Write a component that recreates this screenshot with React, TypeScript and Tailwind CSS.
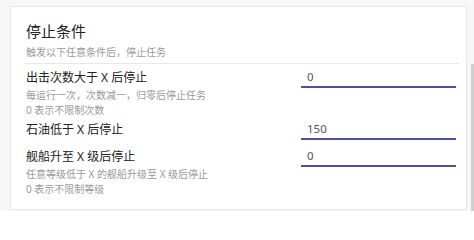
import React from "react";

const font = { fontFamily: '"Noto Sans", "Noto Sans CJK SC", sans-serif' };

interface StopRowProps {
  label: string;
  value: string;
  hints?: string[];
  className?: string;
}

/**
 * One stop condition: label on the left, underlined input on the right
 */
function StopRow({ label, value, hints = [], className = "" }: StopRowProps) {
  return (
    <div className={className}>
      <div className="flex items-end justify-between">
        <div className="pl-[2px] text-[12px] leading-[20px] text-[#222]">{label}</div>
        <div className="mr-[3px] flex h-[21px] w-[155px] items-center border-b-2 border-[#4e4ea3] pl-[6px] text-[11.5px] text-[#555]">
          {value}
        </div>
      </div>
      {hints.map((h) => (
        <div key={h} className="pl-[2px] text-[10px] leading-[15px] text-[#9a9a9a]">
          {h}
        </div>
      ))}
    </div>
  );
}

export default function App() {
  return (
    <div className="flex h-[211px] w-[474px] overflow-hidden bg-[#f7f7f7]" style={font}>
      <div className="ml-[10px] mt-[6px] h-[204px] w-[457px] border border-[#e6e6e6] bg-white pl-[13px] pr-[7px] pt-[13px]">
        <div className="pl-[2px] text-[15px] leading-[23px] text-[#222]">停止条件</div>
        <div className="mt-[2px] pl-[2px] text-[10px] leading-[14px] text-[#9a9a9a]">触发以下任意条件后，停止任务</div>
        <div className="mt-[4px] h-px bg-[#e8e8e8]" />

        <StopRow
          className="mt-[3px]"
          label="出击次数大于 X 后停止"
          value="0"
          hints={["每运行一次，次数减一，归零后停止任务", "0 表示不限制次数"]}
        />
        <StopRow className="mt-[1px]" label="石油低于 X 后停止" value="150" />
        <StopRow
          className="mt-[6px]"
          label="舰船升至 X 级后停止"
          value="0"
          hints={["任意等级低于 X 的舰船升级至 X 级后停止", "0 表示不限制等级"]}
        />
      </div>
      <div className="ml-[4px] flex flex-col">
        <div className="h-[64px]" />
        <div className="w-[3px] flex-1 bg-[#cfcfcf]" />
      </div>
    </div>
  );
}
